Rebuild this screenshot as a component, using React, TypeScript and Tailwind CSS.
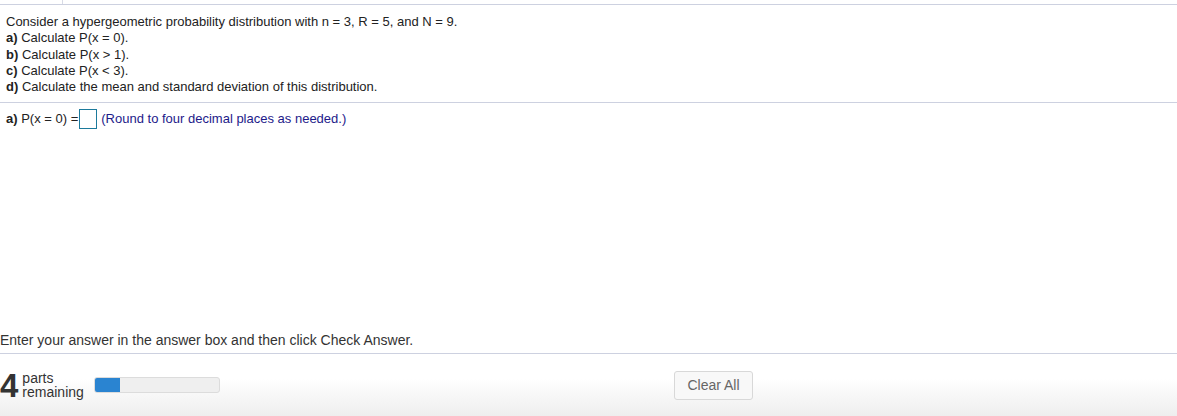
export default function App() {
  const font = { fontFamily: '"Liberation Sans", Arial, sans-serif' };
  return (
    <div className="w-[1177px] h-[416px] bg-white flex flex-col overflow-hidden" style={font}>
      <div className="h-[4px] flex">
        <div className="w-[63px] h-full border-r border-[#d8dbe6]" />
      </div>
      <div className="h-[1px] bg-[#cdd1e0]" />
      <div className="pt-[9px] pl-[6px] text-[13px] leading-[16.3px] text-[#222] h-[97px]">
        <div>Consider a hypergeometric probability distribution with n = 3, R = 5, and N = 9.</div>
        <div><b>a)</b> Calculate P(x = 0).</div>
        <div><b>b)</b> Calculate P(x &gt; 1).</div>
        <div><b>c)</b> Calculate P(x &lt; 3).</div>
        <div><b>d)</b> Calculate the mean and standard deviation of this distribution.</div>
      </div>
      <div className="h-[1px] bg-[#cdd1e0]" />
      <div className="pl-[6px] pt-[6px] flex text-[13px] text-[#222] h-[225px] items-start">
        <div className="flex items-center">
          <span><b>a)</b> P(x = 0) =</span>
          <span className="ml-[1px] w-[18px] h-[20px] border border-[#1c7a9c] inline-block" />
          <span className="ml-[4px] text-[#1d1a8a]">(Round to four decimal places as needed.)</span>
        </div>
      </div>
      <div className="h-[25px] text-[14px] text-[#333] leading-[24px]">
        Enter your answer in the answer box and then click Check Answer.
      </div>
      <div className="h-[1px] bg-[#cdd1e0]" />
      <div className="flex-1 bg-gradient-to-b from-white from-40% to-[#eeeeee] flex items-center">
        <div className="flex items-center w-[674px]">
          <span className="text-[33px] font-bold text-[#333] leading-none">4</span>
          <div className="ml-[4px] text-[14px] leading-[14px] text-[#333] flex flex-col mt-[-1px]">
            <span>parts</span>
            <span>remaining</span>
          </div>
          <div className="ml-[10px] w-[126px] h-[16px] rounded-[3px] bg-[#efefef] border border-[#dcdcdc] overflow-hidden flex mt-[-1px]">
            <div className="w-[25px] h-full bg-[#2a84d1]" />
          </div>
        </div>
        <button className="w-[79px] h-[29px] rounded-[3px] border border-[#d8d8d8] bg-[#f8f8f8] text-[14px] text-[#666]" style={font}>
          Clear All
        </button>
      </div>
    </div>
  );
}
